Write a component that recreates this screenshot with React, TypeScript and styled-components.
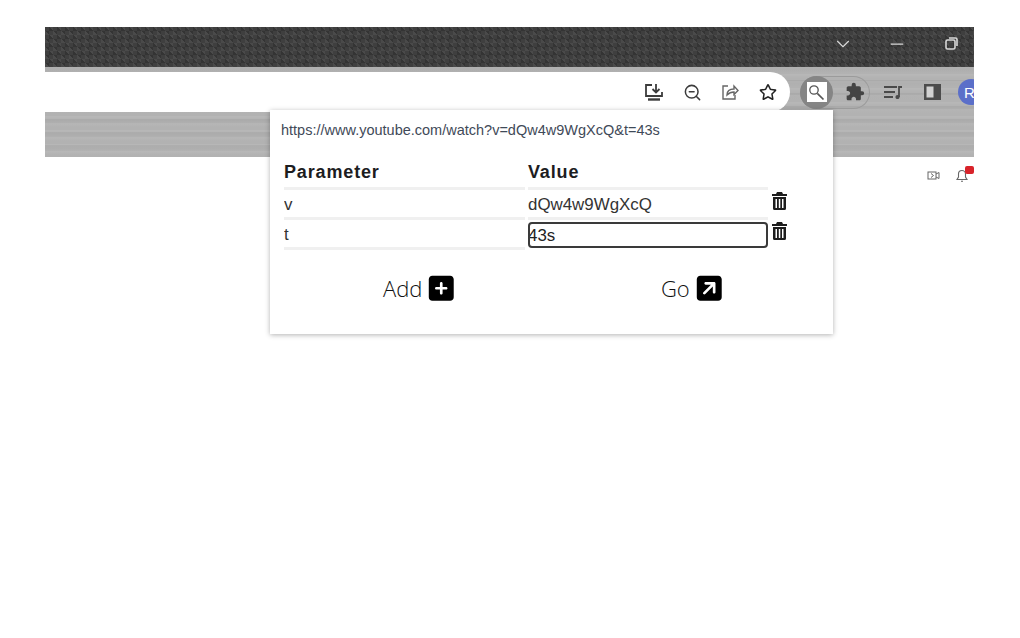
import React from "react";
import { createGlobalStyle, styled } from "styled-components";
import { FaRegStar } from "react-icons/fa";
import { FaSquarePlus, FaSquareArrowUpRight } from "react-icons/fa6";
import { MdExtension } from "react-icons/md";
import { ChevronDown, Minus, ZoomOut } from "lucide-react";

const GlobalStyle = createGlobalStyle`
  html, body {
    margin: 0;
    background: #fff;
    font-family: "Liberation Sans", Arial, sans-serif;
  }
`;

const Page = styled.div`
  position: relative;
  width: 1020px;
  height: 638px;
  padding: 27px 46px 0 45px;
  box-sizing: border-box;
  overflow: hidden;
`;

const BrowserWindow = styled.div`
  width: 929px;
  overflow: hidden;
`;

const TitleBar = styled.div`
  height: 40px;
  display: flex;
  align-items: center;
  justify-content: flex-end;
  padding-bottom: 7px;
  box-sizing: border-box;
  gap: 8px;
  color: #d8d8d8;
  background-color: #3f3f3f;
  background-image:
    linear-gradient(45deg, #4a4a4a 25%, transparent 25%, transparent 75%, #4a4a4a 75%),
    linear-gradient(45deg, #343434 25%, transparent 25%, transparent 75%, #343434 75%);
  background-size: 8px 8px;
  background-position: 0 0, 4px 4px;
`;

const WindowButton = styled.span`
  width: 46px;
  display: flex;
  justify-content: center;
`;

const ChromePanel = styled.div`
  height: 90px;
  padding-top: 5px;
  box-sizing: border-box;
  background-color: #b2b2b2;
  background-image:
    repeating-linear-gradient(180deg, rgba(255, 255, 255, 0.08) 0, transparent 4px, transparent 7px),
    repeating-linear-gradient(180deg, rgba(0, 0, 0, 0.05) 0, transparent 6px, transparent 13px);
`;

const Toolbar = styled.div`
  height: 40px;
  display: flex;
  align-items: center;
`;

const Omnibox = styled.div`
  width: 745px;
  height: 40px;
  flex: none;
  display: flex;
  align-items: center;
  justify-content: flex-end;
  padding-right: 12px;
  gap: 18px;
  box-sizing: border-box;
  background: #fff;
  border-radius: 0 20px 20px 0;
  color: #3c3c3c;
`;

const OmniIcon = styled.span`
  width: 20px;
  height: 20px;
  display: flex;
  align-items: center;
  justify-content: center;
`;

const ExtensionPill = styled.div`
  width: 70px;
  height: 33px;
  margin-left: 10px;
  flex: none;
  display: flex;
  align-items: center;
  border-radius: 17px;
  box-shadow: inset 0 0 0 1px #9b9b9b;
  color: #444;
`;

const ActiveExtension = styled.div`
  width: 33px;
  height: 33px;
  flex: none;
  display: flex;
  align-items: center;
  justify-content: center;
  border-radius: 50%;
  background: #858585;
`;

const ExtensionTile = styled.div`
  width: 20px;
  height: 20px;
  display: flex;
  align-items: center;
  justify-content: center;
  background: #fff;
  color: #555;
`;

const PuzzleSlot = styled.div`
  flex: 1;
  display: flex;
  justify-content: center;
  padding-left: 7px;
`;

const QueueSlot = styled.span`
  width: 24px;
  margin-left: 11px;
  flex: none;
  display: flex;
  justify-content: center;
  color: #4a4a4a;
`;

const PanelSlot = styled.span`
  width: 24px;
  margin-left: 15px;
  flex: none;
  display: flex;
  justify-content: center;
`;

const Avatar = styled.div`
  width: 26px;
  height: 26px;
  margin-left: 14px;
  padding-right: 3px;
  box-sizing: border-box;
  flex: none;
  display: flex;
  align-items: center;
  justify-content: center;
  border-radius: 50%;
  background: #5b6fc9;
  color: #fff;
  font-size: 15px;
`;

const PageStatus = styled.div`
  height: 36px;
  display: flex;
  align-items: center;
  justify-content: flex-end;
  gap: 16px;
  padding-right: 6px;
  color: #666;
`;

const BellWrap = styled.span`
  position: relative;
  display: flex;
`;

const BellBadge = styled.span`
  position: absolute;
  top: -3px;
  right: -6px;
  width: 9px;
  height: 8px;
  border-radius: 2px;
  background: #d8232a;
`;

const Popup = styled.div`
  position: absolute;
  left: 270px;
  top: 110px;
  width: 563px;
  height: 224px;
  box-sizing: border-box;
  padding: 12px 11px 0;
  background: #fff;
  box-shadow: 0 1px 5px rgba(0, 0, 0, 0.3);
`;

const UrlLine = styled.div`
  height: 16px;
  line-height: 16px;
  font-size: 14.5px;
  color: #3f4a58;
  white-space: nowrap;
`;

const ParamGrid = styled.div`
  margin-top: 21px;
  margin-left: 3px;
  display: grid;
  grid-template-columns: 241px 240px 24px;
  column-gap: 3px;
`;

const HeadCell = styled.div`
  height: 28px;
  line-height: 26px;
  font-size: 18px;
  font-weight: 700;
  letter-spacing: 0.85px;
  color: #1d1d1f;
  border-bottom: 3px solid #f0f0f0;
`;

const ParamInput = styled.input`
  width: 100%;
  height: 30px;
  padding: 3px 0 0;
  box-sizing: border-box;
  border: none;
  border-bottom: 3px solid #f0f0f0;
  outline: none;
  font: 16.9px "Liberation Sans", Arial, sans-serif;
  color: #333;
  background: #fff;
`;

const FocusedInput = styled(ParamInput)`
  height: 26px;
  margin: 2px 0;
  padding: 1px 0 0;
  border: 2px solid #3a3a3a;
  border-radius: 4px;
  color: #222;
  text-indent: -2px;
`;

const TrashCell = styled.div`
  padding-top: 2px;
  margin-left: 1px;
  color: #1d1d1d;
`;

const Actions = styled.div`
  margin-top: 23px;
  display: flex;
`;

const ActionButton = styled.button<{ $left: number }>`
  margin-left: ${(p) => p.$left}px;
  padding: 0;
  display: flex;
  align-items: center;
  gap: 5px;
  border: none;
  background: none;
  font: 300 22px "Open Sans", sans-serif;
  color: #111;

  svg {
    color: #000;
  }
`;

function DownloadIcon() {
  return (
    <svg width="20" height="19" viewBox="0 0 20 19" fill="none" stroke="currentColor" strokeWidth="1.8">
      <path d="M8 2H2v11h16V9" />
      <path d="M12 1v8M8.5 6l3.5 3.5L15.5 6" />
      <path d="M4 16.5h12" strokeWidth="2.4" />
    </svg>
  );
}

function ShareIcon() {
  return (
    <svg width="18" height="18" viewBox="0 0 18 18" fill="none" stroke="#666" strokeWidth="1.4">
      <path d="M7 3H2v13h12v-4" />
      <path d="M6 12c0-4 3-6 7-6V3l4 4.5-4 4V9c-3 0-5 1-7 3z" fill="#fff" />
    </svg>
  );
}

function RestoreIcon() {
  return (
    <svg width="13" height="13" viewBox="0 0 13 13" fill="none" stroke="currentColor" strokeWidth="1.6">
      <rect x="1" y="3" width="9" height="9" rx="1.5" />
      <path d="M4 1h6.5A1.5 1.5 0 0 1 12 2.5V9" />
    </svg>
  );
}

function LensIcon() {
  return (
    <svg width="17" height="17" viewBox="0 0 17 17" fill="none" stroke="currentColor">
      <circle cx="6" cy="6" r="4.2" strokeWidth="1.3" />
      <path d="M9.3 9.3L15.5 15.5" strokeWidth="1.7" />
    </svg>
  );
}

function QueueIcon() {
  return (
    <svg width="20" height="14" viewBox="0 0 20 14" fill="none" stroke="currentColor" strokeWidth="1.8">
      <path d="M1 2h13M1 7h11M1 12h9" />
      <path d="M16 12V2h3" />
      <circle cx="14.5" cy="12" r="1.2" fill="currentColor" />
    </svg>
  );
}

function SidePanelIcon() {
  return (
    <svg width="17" height="16" viewBox="0 0 17 16">
      <rect width="17" height="16" fill="#4c4c4c" />
      <rect x="2.5" y="2.5" width="7" height="11" fill="#d2d2d2" />
    </svg>
  );
}

function CastIcon() {
  return (
    <svg width="13" height="9" viewBox="0 0 13 9" fill="none" stroke="currentColor" strokeWidth="1">
      <rect x="1" y="1" width="8" height="7" />
      <path d="M9 3l3-1.5v6L9 6" />
      <path d="M4 2.5l2.5 2L4 6.5" />
    </svg>
  );
}

function BellIcon() {
  return (
    <svg width="12" height="13" viewBox="0 0 12 13" fill="none" stroke="currentColor" strokeWidth="1.1">
      <path d="M1 10.5h10L9.5 8V5a3.5 3.5 0 0 0-7 0v3zM5 12.2h2" />
    </svg>
  );
}

function TrashIcon() {
  return (
    <svg width="15" height="18" viewBox="0 0 15 18" fill="currentColor">
      <path d="M5 0h5l1 2h4v2H0V2h4z" />
      <path d="M1 5h13v11.5a1.5 1.5 0 0 1-1.5 1.5h-10A1.5 1.5 0 0 1 1 16.5zM3.5 7v9h1.5V7zM6.8 7v9h1.5V7zM10 7v9h1.5V7z" fillRule="evenodd" />
    </svg>
  );
}

export default function App() {
  return (
    <Page>
      <GlobalStyle />
      <BrowserWindow>
        <TitleBar>
          <WindowButton>
            <ChevronDown size={22} strokeWidth={1.2} />
          </WindowButton>
          <WindowButton>
            <Minus size={20} strokeWidth={1.5} />
          </WindowButton>
          <WindowButton>
            <RestoreIcon />
          </WindowButton>
        </TitleBar>
        <ChromePanel>
          <Toolbar>
            <Omnibox>
              <OmniIcon>
                <DownloadIcon />
              </OmniIcon>
              <OmniIcon>
                <ZoomOut size={19} strokeWidth={1.9} />
              </OmniIcon>
              <OmniIcon>
                <ShareIcon />
              </OmniIcon>
              <OmniIcon>
                <FaRegStar size={18} color="#222" />
              </OmniIcon>
            </Omnibox>
            <ExtensionPill>
              <ActiveExtension>
                <ExtensionTile>
                  <LensIcon />
                </ExtensionTile>
              </ActiveExtension>
              <PuzzleSlot>
                <MdExtension size={20} />
              </PuzzleSlot>
            </ExtensionPill>
            <QueueSlot>
              <QueueIcon />
            </QueueSlot>
            <PanelSlot>
              <SidePanelIcon />
            </PanelSlot>
            <Avatar>R</Avatar>
          </Toolbar>
        </ChromePanel>
        <PageStatus>
          <CastIcon />
          <BellWrap>
            <BellIcon />
            <BellBadge />
          </BellWrap>
        </PageStatus>
      </BrowserWindow>
      <Popup>
        <UrlLine>https://www.youtube.com/watch?v=dQw4w9WgXcQ&amp;t=43s</UrlLine>
        <ParamGrid>
          <HeadCell>Parameter</HeadCell>
          <HeadCell>Value</HeadCell>
          <div />
          <ParamInput defaultValue="v" />
          <ParamInput defaultValue="dQw4w9WgXcQ" />
          <TrashCell>
            <TrashIcon />
          </TrashCell>
          <ParamInput defaultValue="t" />
          <FocusedInput defaultValue="43s" />
          <TrashCell>
            <TrashIcon />
          </TrashCell>
        </ParamGrid>
        <Actions>
          <ActionButton $left={102}>
            Add <FaSquarePlus size={28.5} />
          </ActionButton>
          <ActionButton $left={205}>
            Go <FaSquareArrowUpRight size={28.5} />
          </ActionButton>
        </Actions>
      </Popup>
    </Page>
  );
}
